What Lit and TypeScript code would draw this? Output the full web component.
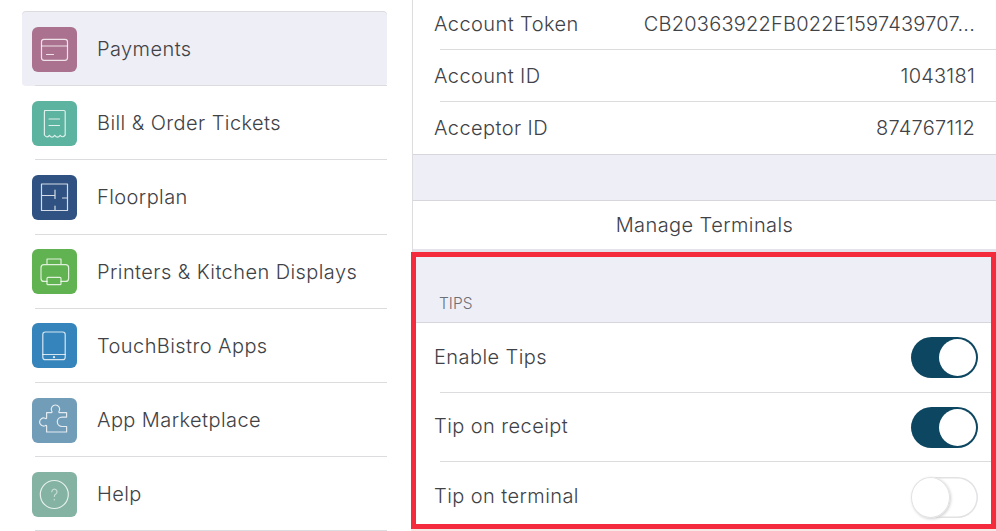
import { LitElement, html, css, svg } from "lit";
import { customElement } from "lit/decorators.js";

const icons: Record<string, unknown> = {
  card: svg`<rect x="9.500" y="12.300" width="26" height="21" rx="2.500"/><path d="M9.500 19h26M14.500 27.500h7"/>`,
  bill: svg`<path d="M12.500 9.500h19.500a1.200 1.200 0 0 1 1.200 1.200V34c-2 2.300-3.300 2.300-5 .3-1.800 2.500-3.500 2.500-5.500 0-1.800 2.500-3.500 2.500-5.300 0-1.700 2.300-3.300 2.200-5-.3V10.700a1.200 1.200 0 0 1 1.100-1.200zM17 18h10.500M17 24.500h10.500"/>`,
  floor: svg`<path d="M9.500 9h26v26.500h-26zM9.500 20.500h13.500M23 15v8.500M23 31v4.500M30.500 23h5"/>`,
  printer: svg`<path d="M15 15.700V10h14v5.700M15 32.400h-3a3 3 0 0 1-3-3V18.700a3 3 0 0 1 3-3h21.600a3 3 0 0 1 3 3v10.700a3 3 0 0 1-3 3H29"/><rect x="15" y="28.400" width="14" height="7.300" rx="1"/>`,
  tablet: svg`<rect x="10.800" y="9" width="22.400" height="27.700" rx="2.500"/><path d="M10.800 31.500h22.400"/><circle cx="22" cy="34.100" r=".6"/>`,
  puzzle: svg`<path d="M14.600 34h20v-5.500H30a4.700 4.700 0 0 1 0-9.400h4.600v-4.500h-7.300c-.7 0-.7-1-.1-1.500a4.200 4.200 0 1 0-7.500 0c.5.500.5 1.500-.2 1.500h-4.900v5.300c0 .8-.8.900-1.500.4a4 4 0 1 0 0 7.400c.7-.5 1.500-.4 1.500.4z"/>`,
  help: svg`<circle cx="22.300" cy="22.500" r="14"/><path d="M19.800 19.800a2.600 2.600 0 1 1 4 2.200c-1 .6-1.500 1.200-1.500 2.500M22.300 27.300v.6" stroke-opacity=".55"/>`,
};

const menu = [
  { label: "Payments", icon: "card", color: "#ab7290", active: true },
  { label: "Bill & Order Tickets", icon: "bill", color: "#5cb3a0" },
  { label: "Floorplan", icon: "floor", color: "#2f5283" },
  { label: "Printers & Kitchen Displays", icon: "printer", color: "#61b250" },
  { label: "TouchBistro Apps", icon: "tablet", color: "#3584bb" },
  { label: "App Marketplace", icon: "puzzle", color: "#729db9" },
  { label: "Help", icon: "help", color: "#84b3a3" },
];

@customElement("app-root")
export class AppRoot extends LitElement {
  static styles = css`
    :host {
      display: block;
      width: 996px;
      height: 531px;
      overflow: hidden;
      background: #fff;
      font-family: "Inter", "Liberation Sans", sans-serif;
      font-size: 20px;
      font-weight: 350;
      letter-spacing: 0.42px;
      color: #404246;
    }
    .page {
      display: grid;
      grid-template-columns: 412px 1fr;
      height: 531px;
    }
    .side {
      padding: 12px 25px 0 22px;
      display: flex;
      flex-direction: column;
    }
    .item {
      height: 74.200px;
      box-sizing: border-box;
      display: flex;
      align-items: center;
      gap: 20px;
      padding: 0 0 0 10px;
      position: relative;
      flex: none;
    }
    .item::after {
      content: "";
      position: absolute;
      left: 13px;
      right: 0;
      bottom: 0;
      height: 1px;
      background: #dcdcdf;
    }
    .item.active {
      background: #eeeef6;
      border-radius: 4px;
      box-shadow: 0 -1px 0 #dcdcdf;
    }
    .icon {
      width: 45px;
      height: 45px;
      border-radius: 6px;
      flex: none;
      display: block;
      fill: none;
      stroke: #fff;
      stroke-opacity: 0.8;
      stroke-width: 1.200;
      stroke-linecap: round;
      stroke-linejoin: round;
    }
    .main {
      border-left: 1px solid #dddde0;
      display: flex;
      flex-direction: column;
      min-width: 0;
    }
    .row {
      display: flex;
      align-items: center;
      justify-content: space-between;
      padding: 0 21px;
      height: 52px;
      box-sizing: border-box;
      position: relative;
      flex: none;
    }
    .row.first {
      height: 50px;
      padding-bottom: 2px;
    }
    .val {
      letter-spacing: 0.22px;
    }
    .sep::after {
      content: "";
      position: absolute;
      left: 27px;
      right: 0;
      bottom: 0;
      height: 1px;
      background: #dcdcdf;
    }
    .band {
      height: 47px;
      flex: none;
      background: #eeeef6;
      border-top: 1px solid #d6d6dc;
      border-bottom: 1px solid #d6d6dc;
      box-sizing: border-box;
    }
    .action {
      height: 48px;
      flex: none;
      display: flex;
      align-items: center;
      justify-content: center;
      background: #fff;
    }
    .gap {
      height: 3px;
      flex: none;
      background: #e4e2ea;
    }
    .tips {
      margin-left: -2px;
      height: 277px;
      flex: none;
      box-sizing: border-box;
      overflow: hidden;
      border: 5px solid #f42b3c;
      display: flex;
      flex-direction: column;
      background: #fff;
    }
    .foot {
      flex: 1;
      margin-left: -2px;
      background: #f6e8e4;
    }
    .head {
      height: 66px;
      flex: none;
      box-sizing: border-box;
      background: #eeeef6;
      border-bottom: 1px solid #d6d6dc;
      padding: 0 0 9px 23px;
      display: flex;
      align-items: flex-end;
      font-size: 15.500px;
      letter-spacing: 0;
      color: #6d6f76;
    }
    .tip {
      height: 69.500px;
      padding: 0 13px 0 18px;
    }
    .tip span {
      margin-bottom: 2px;
    }
    .tip.sep::after {
      left: 24px;
    }
    .tip.last {
      height: 70px;
    }
    .tip.last span {
      margin-bottom: 3px;
    }
    .toggle {
      width: 67px;
      height: 41px;
      border-radius: 21px;
      background: #0c4660;
      box-sizing: border-box;
      display: flex;
      justify-content: flex-end;
      padding: 2px;
      flex: none;
    }
    .toggle i {
      width: 37px;
      height: 37px;
      border-radius: 50%;
      background: #fff;
      display: block;
    }
    .toggle.off {
      background: #fff;
      justify-content: flex-start;
      padding: 0;
      box-shadow: inset 0 0 0 1.500px #e2e1e4;
    }
    .toggle.off i {
      width: 39px;
      height: 41px;
      box-shadow: 1px 1px 3px #cfcfd2, inset 0 0 0 1px #e2e1e4;
    }
  `;

  render() {
    return html`
      <div class="page">
        <nav class="side">
          ${menu.map(
            (m) => html`
              <div class="item ${m.active ? "active" : ""}">
                <svg class="icon" viewBox="0 0 45 45" style="background:${m.color}">${icons[m.icon]}</svg>
                <span>${m.label}</span>
              </div>
            `
          )}
        </nav>
        <main class="main">
          <div class="row first sep"><span>Account Token</span><span class="val">CB20363922FB022E1597439707...</span></div>
          <div class="row sep"><span>Account ID</span><span class="val">1043181</span></div>
          <div class="row"><span>Acceptor ID</span><span class="val">874767112</span></div>
          <div class="band"></div>
          <div class="action">Manage Terminals</div>
          <div class="gap"></div>
          <section class="tips">
            <div class="head">TIPS</div>
            <div class="row tip sep"><span>Enable Tips</span><div class="toggle"><i></i></div></div>
            <div class="row tip sep"><span>Tip on receipt</span><div class="toggle"><i></i></div></div>
            <div class="row tip last"><span>Tip on terminal</span><div class="toggle off"><i></i></div></div>
          </section>
          <div class="foot"></div>
        </main>
      </div>
    `;
  }
}
